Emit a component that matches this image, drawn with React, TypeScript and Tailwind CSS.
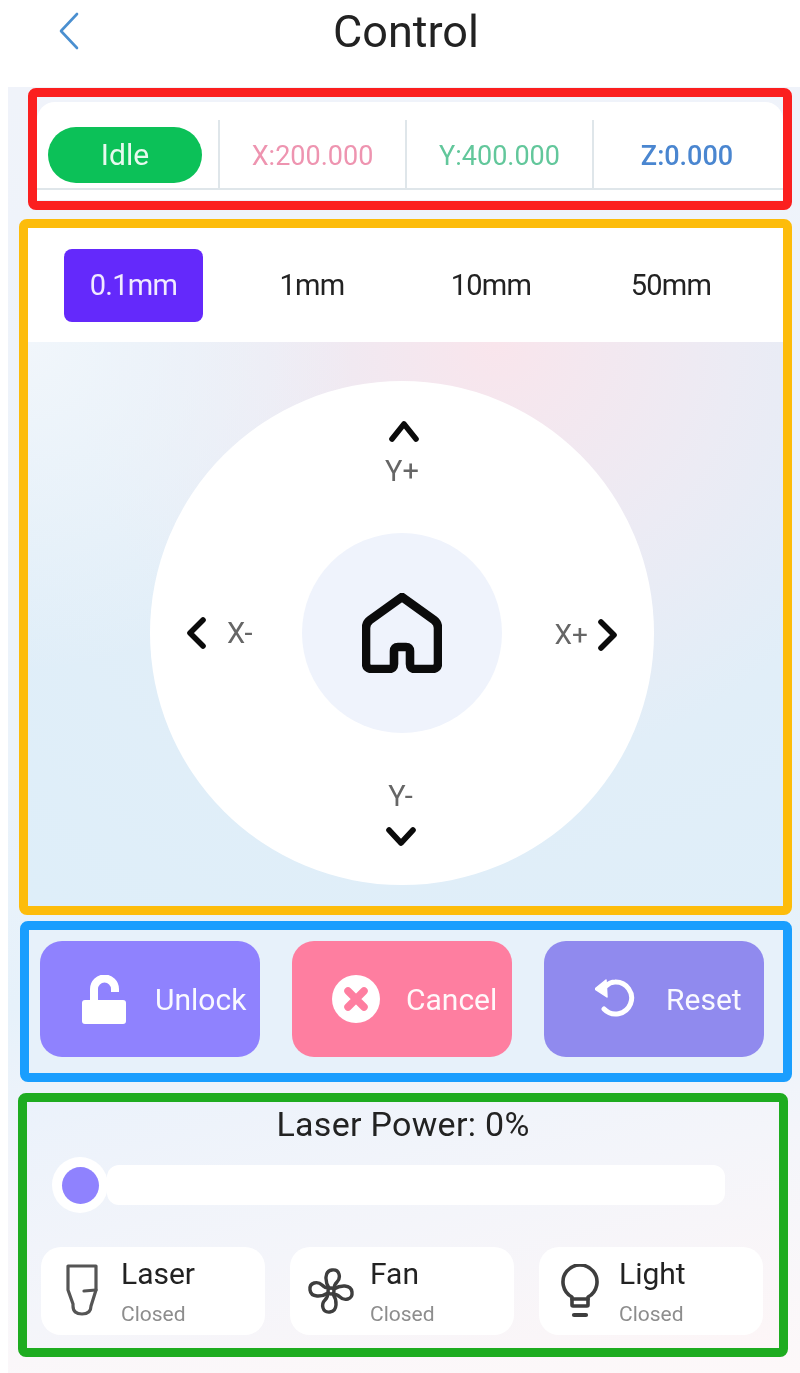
import React from "react";

const Chevron = ({ d, className }: { d: string; className: string }) => (
  <svg viewBox="0 0 32 32" className={className} fill="none" stroke="#0b0b0b" strokeWidth="5.6" strokeLinecap="round" strokeLinejoin="round">
    <path d={d} />
  </svg>
);

const ActionButton = ({ bg, label, icon, gap, pad }: { bg: string; label: string; icon: React.ReactNode; gap: string; pad: string }) => (
  <div className={`h-[116px] w-[220px] rounded-[22px] flex items-center ${bg} ${gap} ${pad}`}>
    {icon}
    <span className="text-[30px] text-white/95 leading-none mt-[2px]">{label}</span>
  </div>
);

const Toggle = ({ label, icon }: { label: string; icon: React.ReactNode }) => (
  <div className="h-[88px] w-[224px] rounded-[20px] bg-white flex items-center pl-[16px]">
    <div className="w-[50px] flex justify-center shrink-0">{icon}</div>
    <div className="ml-[14px] flex flex-col pt-[4px]">
      <span className="text-[30px] leading-[36px] text-[#222] mt-[-3px]">{label}</span>
      <span className="text-[21px] leading-[26px] text-[#8d8d8d] mt-[9px]">Closed</span>
    </div>
  </div>
);

const petal = "M-2 -3 C-6 -9 -7 -20 1 -21 C9 -22 10 -13 6 -9 C3 -6 3 -4 3 -2";

export default function App() {
  return (
    <div className="w-[800px] h-[1373px] bg-white overflow-hidden blur-[0.5px]" style={{ fontFamily: 'Roboto, sans-serif' }}>
      <header className="h-[87px] flex items-center relative">
        <div className="pl-[54px] w-[100px] -mt-[26px]">
          <svg viewBox="0 0 30 40" className="w-[30px] h-[40px]" fill="none" stroke="#4a8fd0" strokeWidth="2.6" strokeLinecap="round" strokeLinejoin="round">
            <path d="M23 3 L7 20 L23 37" />
          </svg>
        </div>
        <h1 className="absolute left-0 right-0 text-center pl-[12px] -mt-[24px] text-[45px] leading-none text-[#222]">Control</h1>
      </header>

      <main className="ml-[8px] h-[1286px] bg-[linear-gradient(175deg,#f0f3fa_0%,#ebf3fb_50%,#e6f1fa_68%,#f4f5fa_82%,#fdf8f9_100%)] pt-[1px]">
        {/* status */}
        <section className="ml-[20px] w-[764px] h-[122px] border-[9px] border-[#fb1f1f] rounded-[8px] pt-[5px]">
          <div className="h-[98px] bg-white rounded-t-[18px]">
            <div className="flex h-[88px] pt-[18px] border-b-2 border-[#dfe6ea]">
              <div className="w-[181px] flex pl-[11px] pt-[7px] h-[70px]">
                <div className="w-[154px] h-[56px] rounded-full bg-[#0cc158] flex items-center justify-center text-[30px] text-white/90 leading-none">Idle</div>
              </div>
              <div className="w-[187px] border-l-2 border-[#dfe6ea] flex items-center justify-center pt-[4px] text-[27px] text-[#ee94b0]">X:200.000</div>
              <div className="w-[187px] border-l-2 border-[#dfe6ea] flex items-center justify-center pt-[4px] text-[27px] text-[#62c79b]">Y:400.000</div>
              <div className="flex-1 border-l-2 border-[#dfe6ea] flex items-center justify-center pt-[4px] text-[27px] font-medium text-[#4a86d0] pr-[3px]">Z:0.000</div>
            </div>
          </div>
        </section>

        {/* jog */}
        <section className="mt-[9px] ml-[11px] w-[773px] h-[696px] border-[9px] border-[#fdbc0b] rounded-[8px] flex flex-col">
          <div className="h-[114px] bg-white flex items-center pl-[36px] text-[29px] text-[#222] shrink-0">
            <div className="w-[139px] h-[73px] rounded-[8px] bg-[#6429fb] text-white/90 flex items-center justify-center tracking-tight pt-[2px]">0.1mm</div>
            <div className="w-[180px] text-center ml-[19px] tracking-tight mt-[2px]">1mm</div>
            <div className="w-[180px] text-center -ml-[1px] tracking-tight mt-[2px]">10mm</div>
            <div className="w-[180px] text-center tracking-tight mt-[2px]">50mm</div>
          </div>
          <div className="flex-1 pl-[122px] pt-[39px] bg-[radial-gradient(circle_at_0%_0%,#f1f6fb_0%,transparent_35%),radial-gradient(circle_at_62%_0%,#f9e5ec_0%,#ecebf4_32%,#e1eef8_58%,#deeef9_100%)]">
            <div className="w-[504px] h-[504px] rounded-full bg-white grid grid-cols-[152px_200px_152px] grid-rows-[152px_200px_152px]">
              <div />
              <div className="flex flex-col items-center pt-[34px] text-[29px] text-[#666] leading-none">
                <Chevron d="M4 24 L16 9 L28 24" className="w-[32px] h-[32px] ml-[4px]" />
                <span className="mt-[10px]">Y+</span>
              </div>
              <div />
              <div className="flex items-center pl-[33px] text-[29px] text-[#666] leading-none">
                <Chevron d="M20 3 L7 16 L20 29" className="w-[32px] h-[32px] shrink-0" />
                <span className="ml-[12px]">X-</span>
              </div>
              <div className="rounded-full bg-[#eff3fc] flex items-center justify-center">
                <svg viewBox="0 0 80 80" className="w-[80px] h-[80px]" fill="none" stroke="#0b0b0b" strokeWidth="8.6" strokeLinejoin="round">
                  <path d="M40 4 L8 27 Q4 30 4 35 L4 70 Q4 76 10 76 L27 76 Q32 76 32 71 L32 58 Q32 54 36 54 L44 54 Q48 54 48 58 L48 71 Q48 76 53 76 L70 76 Q76 76 76 70 L76 35 Q76 30 72 27 Z" />
                </svg>
              </div>
              <div className="flex items-center justify-end pr-[32px] text-[28px] text-[#666] leading-none">
                <span className="mr-[2px] mt-[4px]">X+</span>
                <Chevron d="M11 3 L24 16 L11 29" className="w-[32px] h-[32px] shrink-0 mt-[4px]" />
              </div>
              <div />
              <div className="flex flex-col items-center pt-[49px] text-[29px] text-[#666] leading-none">
                <span className="-ml-[3px]">Y-</span>
                <Chevron d="M4 10 L16 23 L28 10" className="w-[32px] h-[32px] -ml-[3px] mt-[9px]" />
              </div>
              <div />
            </div>
          </div>
        </section>

        {/* actions */}
        <section className="mt-[6px] ml-[12px] w-[772px] h-[161px] border-[9px] border-[#1a9efe] rounded-[8px] bg-[#e7f1fa] flex pt-[11px] pl-[11px] gap-[32px]">
          <ActionButton
            bg="bg-[#8f82fe]"
            label="Unlock"
            gap="gap-[28px]"
            pad="pl-[41px]"
            icon={
              <svg viewBox="0 0 46 52" className="w-[46px] h-[52px] mt-[4px]" fill="none">
                <rect x="1" y="25" width="44" height="24" rx="3" fill="#fff" />
                <path d="M13 27 L13 14 A10.5 10.5 0 0 1 34 14 L34 17" stroke="#fff" strokeWidth="8" />
              </svg>
            }
          />
          <ActionButton
            bg="bg-[#fe7ea0]"
            label="Cancel"
            gap="gap-[26px]"
            pad="pl-[40px]"
            icon={
              <svg viewBox="0 0 48 48" className="w-[48px] h-[48px]">
                <circle cx="24" cy="24" r="24" fill="#fff" />
                <path d="M16 16 L32 32 M32 16 L16 32" stroke="#fe7ea0" strokeWidth="7.5" strokeLinecap="round" />
              </svg>
            }
          />
          <ActionButton
            bg="bg-[#908aee]"
            label="Reset"
            gap="gap-[31px]"
            pad="pl-[51px]"
            icon={
              <svg viewBox="0 0 40 40" className="w-[40px] h-[40px]" fill="none">
                <path d="M11 7 C14 4 17 3 20 3 A16 16 0 1 1 9 30" stroke="#fff" strokeWidth="5" strokeLinecap="round" />
                <path d="M0 10 L11 1 L12 18 Z" fill="#fff" stroke="#fff" strokeWidth="1.5" strokeLinejoin="round" />
              </svg>
            }
          />
        </section>

        {/* laser */}
        <section className="mt-[11px] ml-[10px] w-[770px] h-[264px] border-[9px] border-[#1eac20] rounded-[8px] flex flex-col bg-[linear-gradient(165deg,#ebf2fb_0%,#f4f5fa_50%,#fdf6f7_100%)]">
          <div className="text-center text-[34px] tracking-[0.3px] leading-[42px] text-[#222] mt-[1px]">Laser Power: 0%</div>
          <div className="relative mt-[20px] ml-[80px] w-[618px] h-[40px] rounded-[12px] bg-white">
            <div className="absolute -left-[55px] -top-[8px] w-[56px] h-[56px] rounded-full bg-white flex items-center justify-center">
              <div className="w-[37px] h-[37px] rounded-full bg-[#8f82fe]" />
            </div>
          </div>
          <div className="mt-[42px] ml-[14px] flex gap-[25px]">
            <Toggle
              label="Laser"
              icon={
                <svg viewBox="0 0 32 52" className="w-[32px] h-[52px] -mt-[2px]" fill="none" stroke="#555" strokeWidth="3.2" strokeLinejoin="round" strokeLinecap="round">
                  <path d="M2 2 L30 2 L30 26 L25 42 Q25 50 16 50 Q7 50 7 42 L7 40 L2 26 Z" />
                  <path d="M30 26 L18 27" />
                </svg>
              }
            />
            <Toggle
              label="Fan"
              icon={
                <svg viewBox="-25 -25 50 50" className="w-[50px] h-[50px]" fill="none" stroke="#3e3e3e" strokeWidth="3.4" strokeLinejoin="round">
                  <path d={petal} />
                  <path d={petal} transform="rotate(90)" />
                  <path d={petal} transform="rotate(180)" />
                  <path d={petal} transform="rotate(270)" />
                  <circle cx="0" cy="0" r="3" />
                </svg>
              }
            />
            <Toggle
              label="Light"
              icon={
                <svg viewBox="0 0 40 55" className="w-[40px] h-[55px]" fill="none" stroke="#3e3e3e" strokeWidth="3.6" strokeLinejoin="round" strokeLinecap="round">
                  <path d="M12 33 A17 17 0 1 1 28 33 L28 41 Q28 42 27 42 L13 42 Q12 42 12 41 Z" />
                  <path d="M12 35 L28 35" />
                  <path d="M14 51 L26 51" strokeWidth="4.2" />
                </svg>
              }
            />
          </div>
        </section>
      </main>
    </div>
  );
}
